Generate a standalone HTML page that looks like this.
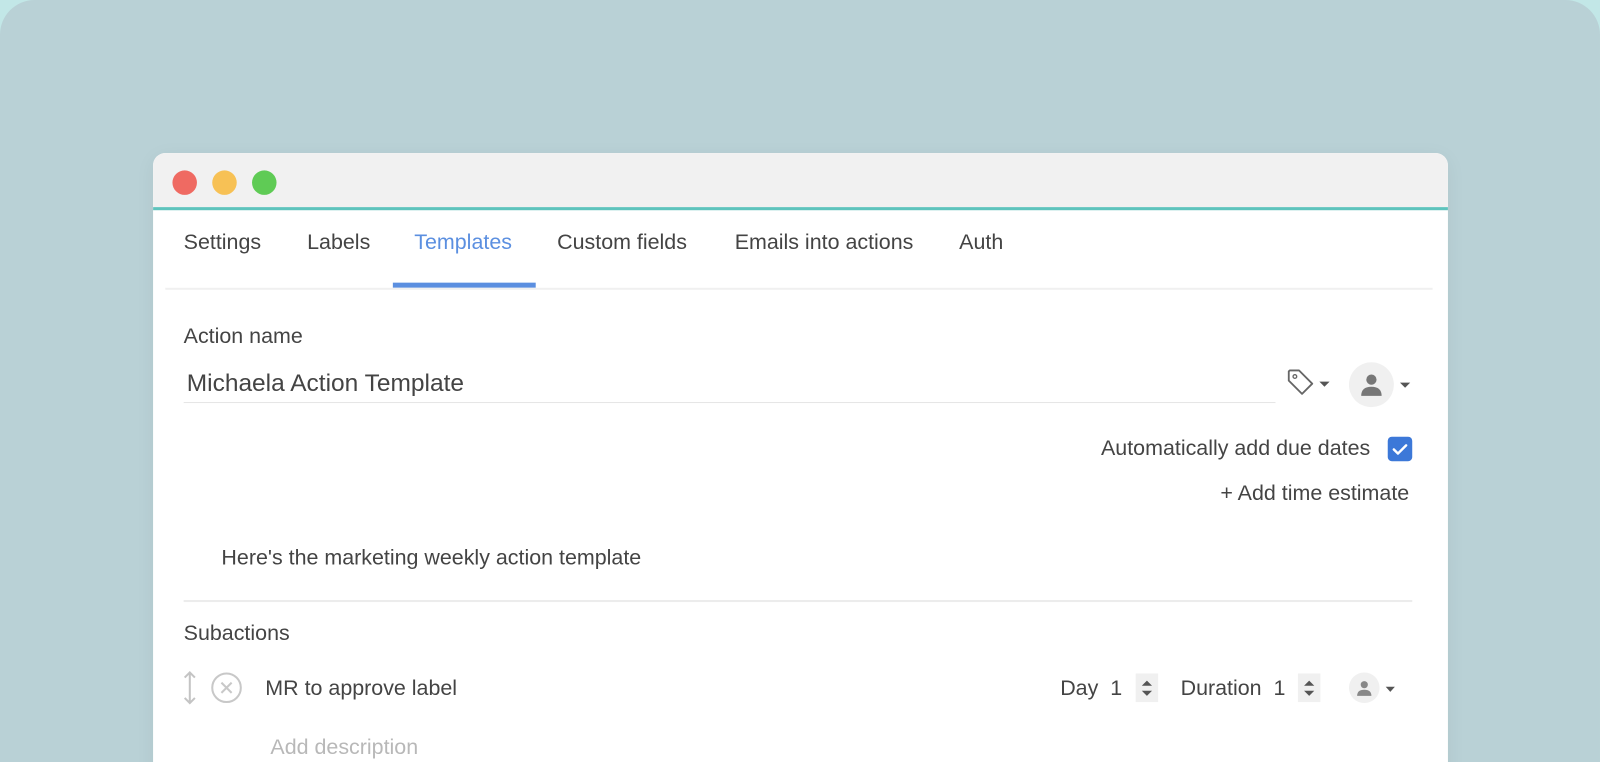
<!DOCTYPE html>
<html><head><style>
*{margin:0;padding:0;box-sizing:border-box}
html,body{width:1600px;height:762px;overflow:hidden;background:#c2e7e7}
body{font-family:"Liberation Sans",sans-serif;color:#4a4a4a;position:relative}
.sc{position:absolute;left:0;top:0;width:1568px;height:747px;transform:scale(1.0204);transform-origin:0 0}
.bg{position:absolute;left:0;top:0;width:1568px;height:760px;background:#b9d1d6;border-top-left-radius:34px;border-top-right-radius:34px}
.win{position:absolute;left:150px;top:150px;width:1269px;height:620px;background:#fff;border-radius:12px 12px 0 0;overflow:hidden;box-shadow:0 4px 20px rgba(0,0,0,.05)}
.tb{height:56px;background:#f1f1f1;border-bottom:3px solid #5ec4bd;position:relative}
.dot{position:absolute;top:17px;width:24px;height:24px;border-radius:50%}
.t{position:absolute;font-size:21px;color:#444;white-space:nowrap}
.abs{position:absolute}
</style></head><body>
<div class="sc">
<div class="bg"></div>
<div class="win">
 <div class="tb">
  <div class="dot" style="left:19px;background:#ef6a62"></div>
  <div class="dot" style="left:58px;background:#f7c155"></div>
  <div class="dot" style="left:97px;background:#5fcb55"></div>
 </div>
 <div class="t" style="left:30px;top:76px">Settings</div>
 <div class="t" style="left:151px;top:76px">Labels</div>
 <div class="t" style="left:256px;top:76px;color:#5b8fe0">Templates</div>
 <div class="t" style="left:396px;top:76px">Custom fields</div>
 <div class="t" style="left:570px;top:76px">Emails into actions</div>
 <div class="t" style="left:790px;top:76px">Auth</div>
 <div class="abs" style="left:235px;top:127px;width:140px;height:5px;background:#5b8fe0"></div>
 <div class="abs" style="left:12px;top:132px;width:1242px;height:2px;background:#f0f0f0"></div>
 <div class="t" style="left:30px;top:168px">Action name</div>
 <div class="t" style="left:33px;top:212px;font-size:24px">Michaela Action Template</div>
 <div class="abs" style="left:30px;top:244px;width:1070px;height:1px;background:#e6e6e6"></div>
 <svg class="abs" style="left:1110px;top:210px" width="50" height="32" viewBox="0 0 50 32"><path d="M3 4 L3 13 L16 26 L26 16 L13 3 L4 3Z" fill="none" stroke="#666" stroke-width="1.8" stroke-linejoin="round"/><circle cx="9" cy="9" r="1.8" fill="none" stroke="#666" stroke-width="1.3"/><path d="M33 14h10l-5 5z" fill="#555"/></svg>
 <div class="abs" style="left:1172px;top:205px;width:44px;height:44px;border-radius:50%;background:#f0f0f0"></div>
 <svg class="abs" style="left:1172px;top:205px" width="70" height="44"><circle cx="22" cy="17" r="5" fill="#777"/><path d="M12 33 q0-9 10-9 q10 0 10 9z" fill="#777"/><path d="M50 20h10l-5 5z" fill="#555"/></svg>
 <div class="t" style="left:929px;top:278px">Automatically add due dates</div>
 <div class="abs" style="left:1210px;top:278px;width:24px;height:24px;border-radius:4px;background:#3c78d8"></div>
 <svg class="abs" style="left:1210px;top:278px" width="24" height="24"><path d="M6 12.5l4 4 8-8" fill="none" stroke="#fff" stroke-width="2.4" stroke-linecap="round" stroke-linejoin="round"/></svg>
 <div class="t" style="left:1046px;top:322px">+ Add time estimate</div>
 <div class="t" style="left:67px;top:385px">Here's the marketing weekly action template</div>
 <div class="abs" style="left:30px;top:438px;width:1204px;height:2px;background:#ececec"></div>
 <div class="t" style="left:30px;top:459px">Subactions</div>
 <svg class="abs" style="left:26px;top:506px" width="64" height="36"><path d="M10 3v30M5 8l5-5 5 5M5 28l5 5 5-5" fill="none" stroke="#c4c4c4" stroke-width="2"/><circle cx="46" cy="18" r="14" fill="none" stroke="#c8c8c8" stroke-width="2"/><path d="M41 13l10 10M51 13l-10 10" stroke="#c8c8c8" stroke-width="2"/></svg>
 <div class="t" style="left:110px;top:513px">MR to approve label</div>
 <div class="t" style="left:889px;top:513px">Day&nbsp; 1</div>
 <div class="abs" style="left:963px;top:510px;width:22px;height:28px;background:#f0f0f0"></div>
 <svg class="abs" style="left:963px;top:510px" width="22" height="28"><path d="M6 12l5-5 5 5zM6 17l5 5 5-5z" fill="#555"/></svg>
 <div class="t" style="left:1007px;top:513px">Duration&nbsp; 1</div>
 <div class="abs" style="left:1122px;top:510px;width:22px;height:28px;background:#f0f0f0"></div>
 <svg class="abs" style="left:1122px;top:510px" width="22" height="28"><path d="M6 12l5-5 5 5zM6 17l5 5 5-5z" fill="#555"/></svg>
 <div class="abs" style="left:1172px;top:509px;width:30px;height:30px;border-radius:50%;background:#f0f0f0"></div>
 <svg class="abs" style="left:1172px;top:509px" width="50" height="30"><circle cx="15" cy="12" r="3.5" fill="#888"/><path d="M8 23q0-6 7-6q7 0 7 6z" fill="#888"/><path d="M36 14h9l-4.5 5z" fill="#555"/></svg>
 <div class="t" style="left:115px;top:571px;color:#b8b8b8">Add description</div>
</div>
</div>
</body></html>
